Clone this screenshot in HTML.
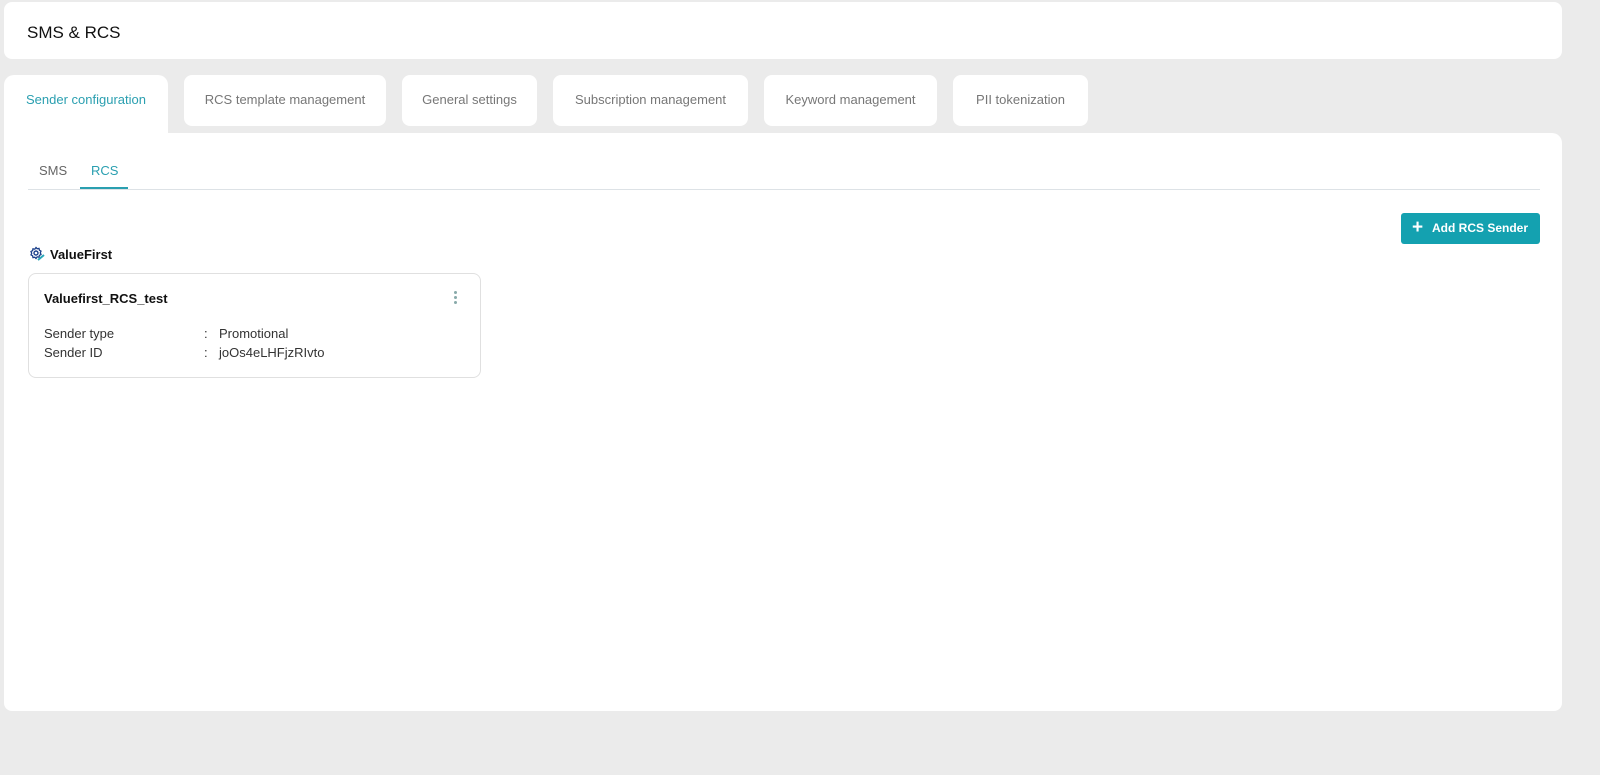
<!DOCTYPE html>
<html><head><style>
*{box-sizing:border-box;margin:0;padding:0}
body{width:1600px;height:775px;background:#ebebeb;font-family:"Liberation Sans",sans-serif;position:relative;overflow:hidden}
.hdr{position:absolute;left:4px;top:2px;width:1558px;height:57px;background:#fff;border-radius:8px;font-size:17px;color:#111;padding:21px 0 0 23px}
.tab{position:absolute;top:75px;height:51px;background:#fff;border-radius:8px;font-size:13px;color:#777;text-align:center;line-height:50px}
.act{left:4px;width:164px;height:70px;border-radius:10px 10px 0 0;color:#2a9fb0}
.panel{position:absolute;left:4px;top:133px;width:1558px;height:578px;background:#fff;border-radius:0 10px 8px 8px}
.sub{position:absolute;top:163px;font-size:13px;color:#666}
.line{position:absolute;left:28px;top:189px;width:1512px;height:1px;background:#dde2e6}
.btn{position:absolute;left:1401px;top:213px;width:139px;height:31px;background:#14a1b0;border-radius:3px;color:#fff;font-size:12px;font-weight:bold;line-height:31px;padding-left:31px;white-space:nowrap}
.card{position:absolute;left:28px;top:273px;width:453px;height:105px;border:1px solid #e0e0e0;border-radius:8px;font-size:13px;color:#333}
</style></head><body>
<div class="hdr">SMS &amp; RCS</div>
<div class="panel"></div>
<div class="tab act">Sender configuration</div>
<div class="tab" style="left:184px;width:202px">RCS template management</div>
<div class="tab" style="left:402px;width:135px">General settings</div>
<div class="tab" style="left:553px;width:195px">Subscription management</div>
<div class="tab" style="left:764px;width:173px">Keyword management</div>
<div class="tab" style="left:953px;width:135px">PII tokenization</div>
<div class="sub" style="left:39px">SMS</div>
<div class="sub" style="left:91px;color:#2a9fb0">RCS</div>
<div class="line"></div>
<div style="position:absolute;left:80px;top:187px;width:48px;height:2px;background:#2a9fb0"></div>
<div class="btn"><span style="position:absolute;left:11px;top:-1px;font-size:19px;font-weight:bold">+</span>Add RCS Sender</div>
<svg style="position:absolute;left:29px;top:246px" width="16" height="16" viewBox="0 0 16 16"><circle cx="7" cy="7" r="2" fill="none" stroke="#1a3f8a" stroke-width="1.4"/><path d="M7 1.5l1.2 1.3 1.8-.4.4 1.8 1.6.9-.7 1.7.7 1.7-1.6.9-.4 1.8-1.8-.4L7 12.5 5.8 11.2 4 11.6 3.6 9.8 2 8.9 2.7 7.2 2 5.5l1.6-.9.4-1.8 1.8.4z" fill="none" stroke="#1a3f8a" stroke-width="1.3"/><path d="M9 14l6-5" stroke="#2aa7b8" stroke-width="2"/></svg>
<div style="position:absolute;left:50px;top:247px;font-size:13px;font-weight:bold;color:#111">ValueFirst</div>
<div class="card">
<div style="position:absolute;left:15px;top:17px;font-weight:bold;color:#111">Valuefirst_RCS_test</div>
<div style="position:absolute;left:425px;top:17px;width:3px">
<div style="width:3px;height:3px;border-radius:50%;background:#8aa;margin-bottom:2px"></div><div style="width:3px;height:3px;border-radius:50%;background:#8aa;margin-bottom:2px"></div><div style="width:3px;height:3px;border-radius:50%;background:#8aa"></div></div>
<div style="position:absolute;left:15px;top:52px">Sender type</div>
<div style="position:absolute;left:175px;top:52px">:</div>
<div style="position:absolute;left:190px;top:52px">Promotional</div>
<div style="position:absolute;left:15px;top:71px">Sender ID</div>
<div style="position:absolute;left:175px;top:71px">:</div>
<div style="position:absolute;left:190px;top:71px">joOs4eLHFjzRIvto</div>
</div>
</body></html>
